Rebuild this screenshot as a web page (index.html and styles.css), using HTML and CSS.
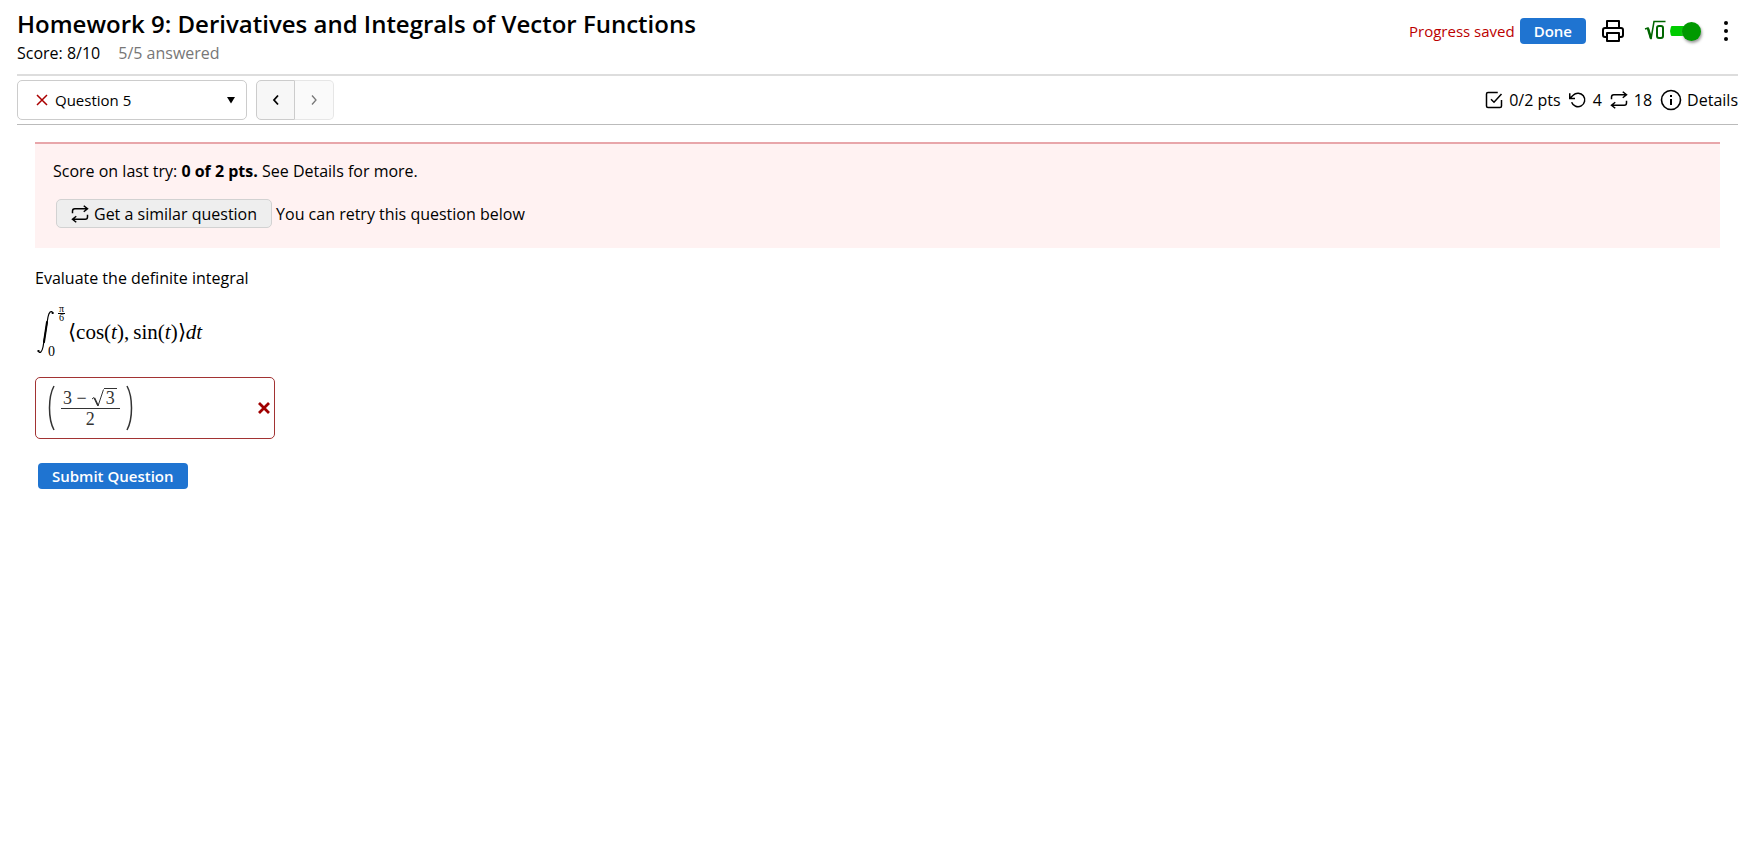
FILE: index.html
```html
<!DOCTYPE html>
<html lang="en">
<head>
<meta charset="utf-8">
<title>Homework 9: Derivatives and Integrals of Vector Functions</title>
<link rel="stylesheet" href="styles.css">
</head>

<body>
<header class="header">
 <div>
  <h1>Homework 9: Derivatives and Integrals of Vector Functions</h1>
  <div class="score"><span>Score: 8/10</span><span class="answered">5/5 answered</span></div>
 </div>
 <div class="tools">
  <span class="saved">Progress saved</span>
  <button type="button" class="primary">Done</button>
  <button type="button" class="icon print" aria-label="Print">
   <svg width="24" height="24" viewBox="0 0 24 24" fill="none" stroke="#000" stroke-width="2" stroke-linejoin="round"><path d="M6 9V2h12v7M6 18H4a2 2 0 0 1-2-2v-5a2 2 0 0 1 2-2h16a2 2 0 0 1 2 2v5a2 2 0 0 1-2 2h-2M6 14h12v8H6z"/></svg>
  </button>
  <label class="mathtoggle">
   <svg width="22" height="22" viewBox="0 0 22 22" fill="none" stroke="#060"><path d="M1 9l3-1 3 11L10 1.500h11.500" stroke-width="1.500"/><path d="M4 8.500l3 10" stroke-width="2.500"/><rect x="13" y="6" width="6" height="12" rx="2" stroke-width="2"/></svg>
   <input type="checkbox" class="switch" aria-label="Equation editor" checked>
  </label>
  <button type="button" class="icon more" aria-label="More options">
   <svg width="6" height="22" viewBox="0 0 6 22"><circle cx="3" cy="3" r="2"/><circle cx="3" cy="11" r="2"/><circle cx="3" cy="19" r="2"/></svg>
  </button>
 </div>
</header>

<nav class="navbar">
 <div class="picker">
  <svg width="12" height="12" viewBox="0 0 12 12" stroke="#a00" stroke-width="1.500"><path d="M1 1l10 10M11 1L1 11"/></svg>
  <select aria-label="Question"><option>Question 5</option></select>
  <svg class="caret" width="10" height="8" viewBox="0 0 10 8"><path d="M1 1h8L5 7.500z"/></svg>
 </div>
 <div class="steps">
  <button type="button" aria-label="Previous question"><svg width="8" height="12" viewBox="0 0 8 12" fill="none" stroke="#000" stroke-width="1.800"><path d="M6 1.500L2 6l4 4.500"/></svg></button>
  <button type="button" aria-label="Next question" disabled><svg width="8" height="12" viewBox="0 0 8 12" fill="none" stroke="#777" stroke-width="1.300"><path d="M2 1.500L6 6l-4 4.500"/></svg></button>
 </div>
 <div class="info">
  <svg width="18" height="18" viewBox="0 0 24 24" fill="none" stroke="#000" stroke-width="2"><path d="M8 11l4 4L22 4M22 12v8a2 2 0 0 1-2 2H4a2 2 0 0 1-2-2V4a2 2 0 0 1 2-2h13"/></svg>
  <span>0/2 pts</span>
  <svg class="undo" width="18" height="18" viewBox="0 0 24 24" fill="none" stroke="#000" stroke-width="2"><path d="M1 3v7h7M3.500 15a9 9 0 1 0 2-9.400L1 10"/></svg>
  <span>4</span>
  <svg class="swap" width="18" height="18" viewBox="0 0 24 24" fill="none" stroke="#000" stroke-width="2"><path d="M17 1l5 4-5 4M2 11V8a3 3 0 0 1 3-3h17M7 23l-5-4 5-4M22 13v3a3 3 0 0 1-3 3H2"/></svg>
  <span>18</span>
  <button type="button" class="details">
   <svg width="22" height="22" viewBox="0 0 22 22" fill="none" stroke="#000"><circle cx="11" cy="11" r="9.500" stroke-width="1.600"/><path d="M11 6v2M11 10v6" stroke-width="2"/></svg>
   Details
  </button>
 </div>
</nav>

<main class="question">
 <section class="result">
  <p>Score on last try: <b>0 of 2 pts.</b> See Details for more.</p>
  <div class="retry">
   <button type="button" class="similar">
    <svg width="18" height="18" viewBox="0 0 24 24" fill="none" stroke="#000" stroke-width="2"><path d="M17 1l5 4-5 4M2 11V8a3 3 0 0 1 3-3h17M7 23l-5-4 5-4M22 13v3a3 3 0 0 1-3 3H2"/></svg>
    Get a similar question
   </button>
   <span>You can retry this question below</span>
  </div>
 </section>

 <p class="prompt">Evaluate the definite integral</p>

 <div class="math integral">
  <svg width="18" height="44" viewBox="0 0 18 44" fill="none" stroke="#000" stroke-linecap="round"><path d="M16 3c-2-3-4-1-5 4L6 37c-1 5-3 7-5 4" stroke-width="1.200"/><path d="M10 12L7 32" stroke-width="2"/><path d="M15.500 3h.2M1.500 41h.2" stroke-width="2"/></svg>
  <span class="limits">
   <span class="frac small"><span>π</span><span>6</span></span>
   <span class="lower">0</span>
  </span>
  <span>⟨cos(<i>t</i>),&#8201;sin(<i>t</i>)⟩<i>dt</i></span>
 </div>

 <div class="answer" role="textbox" aria-label="Answer" tabindex="0">
  <span class="math formula">
   <svg width="7" height="46" viewBox="0 0 7 46" fill="none" stroke="#333" stroke-width="1.500"><path d="M6 1C0 12 0 34 6 45"/></svg>
   <span class="frac">
    <span class="top">3 − <svg width="13" height="18" viewBox="0 0 13 18" fill="none" stroke="#333"><path d="M1 10l2-1.500L7 17 12.500.500" stroke-width="1"/><path d="M3.500 9L7 16.500" stroke-width="1.600"/></svg><span class="root">3</span></span>
    <span>2</span>
   </span>
   <svg width="7" height="46" viewBox="0 0 7 46" fill="none" stroke="#333" stroke-width="1.500"><path d="M1 1c6 11 6 33 0 44"/></svg>
  </span>
  <svg width="12" height="12" viewBox="0 0 12 12" stroke="#a00000" stroke-width="2.800"><path d="M1 1l10 10M11 1L1 11"/></svg>
 </div>

 <button type="submit" class="primary submit">Submit Question</button>
</main>
</body>
</html>
```

FILE: styles.css
```css
*{
    box-sizing: border-box;
}

body{
    margin: 0;
    padding: 0 17px;
    background: #fff;
    color: #000;
    font-family: "Trebuchet MS", "Open Sans", sans-serif;
    font-size: 16px;
    line-height: 20px;
}

h1, p{
    margin: 0;
}

button, select{
    font: inherit;
    color: inherit;
}

svg{
    flex: none;
    display: block;
}

/* top of the page */
.header{
    display: flex;
    justify-content: space-between;
    height: 76px;
    padding-top: 9px;
    border-bottom: 2px solid #ddd;
}

h1{
    font-size: 24px;
    font-weight: 600;
    line-height: 30px;
}

.score{
    display: flex;
    gap: 18px;
    padding-top: 4px;
}

.answered{
    color: #777;
}

.tools{
    display: flex;
    align-items: center;
    height: 44px;
}

.saved{
    color: #b00;
    font-size: 15px;
    margin-right: 5px;
}

.primary{
    height: 26px;
    padding: 0 14px;
    border: 0;
    border-radius: 4px;
    background: #1f74d1;
    color: #fff;
    font-size: 15px;
    font-weight: 600;
}

.icon{
    padding: 0;
    border: 0;
    background: none;
}

.print{
    margin: 0 19px 0 15px;
}

.mathtoggle{
    display: flex;
    align-items: center;
    gap: 4px;
}

.switch{
    appearance: none;
    display: flex;
    align-items: center;
    justify-content: flex-end;
    width: 31px;
    height: 20px;
    margin: 0;
    background: linear-gradient(#0c0, #0c0) 0 center / 20px 10px no-repeat;
    border-radius: 10px;
}

.switch::after{
    content: "";
    width: 19px;
    height: 19px;
    border-radius: 50%;
    background: #090;
    box-shadow: 1px 2px 3px #999;
}

.more{
    margin: 0 9px 0 22px;
}

/* question picker row */
.navbar{
    display: flex;
    align-items: center;
    height: 49px;
    border-bottom: 1px solid #bbb;
}

.picker{
    display: flex;
    align-items: center;
    gap: 7px;
    width: 230px;
    height: 40px;
    padding: 0 10px 0 18px;
    border: 1px solid #ccc;
    border-radius: 5px;
}

.picker select{
    flex: 1;
    appearance: none;
    padding: 0;
    border: 0;
    background: none;
    font-size: 15px;
}

.steps{
    display: flex;
    margin-left: 9px;
}

.steps button{
    display: flex;
    align-items: center;
    justify-content: center;
    width: 39px;
    height: 40px;
    padding: 0;
    border: 1px solid #ccc;
    border-radius: 5px 0 0 5px;
    background: #f7f7f7;
}

.steps button:disabled{
    border-color: #e6e6e6;
    border-left: 0;
    border-radius: 0 5px 5px 0;
    background: #fafafa;
}

.info{
    display: flex;
    align-items: center;
    gap: 6px;
    margin-left: auto;
}

.undo, .swap, .details{
    margin-left: 2px;
}

.details{
    display: flex;
    align-items: center;
    gap: 5px;
    padding: 0;
    border: 0;
    background: none;
}

/* question area */
.question{
    padding: 17px 18px;
}

.result{
    height: 106px;
    padding: 17px 18px 0;
    border-top: 2px solid #e8a6aa;
    background: #fff2f2;
}

.retry{
    display: flex;
    align-items: center;
    gap: 4px;
    padding: 18px 3px 0;
}

.similar{
    display: flex;
    align-items: center;
    gap: 5px;
    height: 29px;
    padding: 0 14px;
    border: 1px solid #d2d2d2;
    border-radius: 5px;
    background: #eee;
}

.prompt{
    padding-top: 20px;
}

.math{
    display: flex;
    align-items: center;
    font-family: "Liberation Serif", serif;
    font-size: 18px;
}

.integral{
    height: 56px;
    margin: 16px 2px 0;
    font-size: 21px;
}

.limits{
    display: flex;
    flex-direction: column;
    justify-content: space-between;
    height: 54px;
    margin-right: 3px;
}

.frac{
    display: flex;
    flex-direction: column;
    align-items: center;
}

.small{
    align-self: flex-end;
    font-size: 10px;
    line-height: 8px;
    margin-left: 3px;
}

.small span:first-child{
    border-bottom: 1px solid #000;
    padding: 0 1px;
}

.lower{
    font-size: 14px;
    line-height: 14px;
    margin-left: -7px;
}

.answer{
    display: flex;
    align-items: center;
    justify-content: space-between;
    width: 240px;
    height: 62px;
    margin-top: 17px;
    padding: 0 4px 0 12px;
    border: 1px solid #a23333;
    border-radius: 5px;
}

.formula{
    gap: 6px;
    color: #333;
}

.formula .top{
    display: flex;
    align-items: flex-end;
    gap: 4px;
    padding: 0 3px 1px 2px;
    border-bottom: 1px solid #333;
    line-height: 18px;
}

.root{
    margin-left: -4px;
    padding: 0 2px;
    border-top: 1px solid #333;
}

.submit{
    margin: 24px 3px 0;
}
```
